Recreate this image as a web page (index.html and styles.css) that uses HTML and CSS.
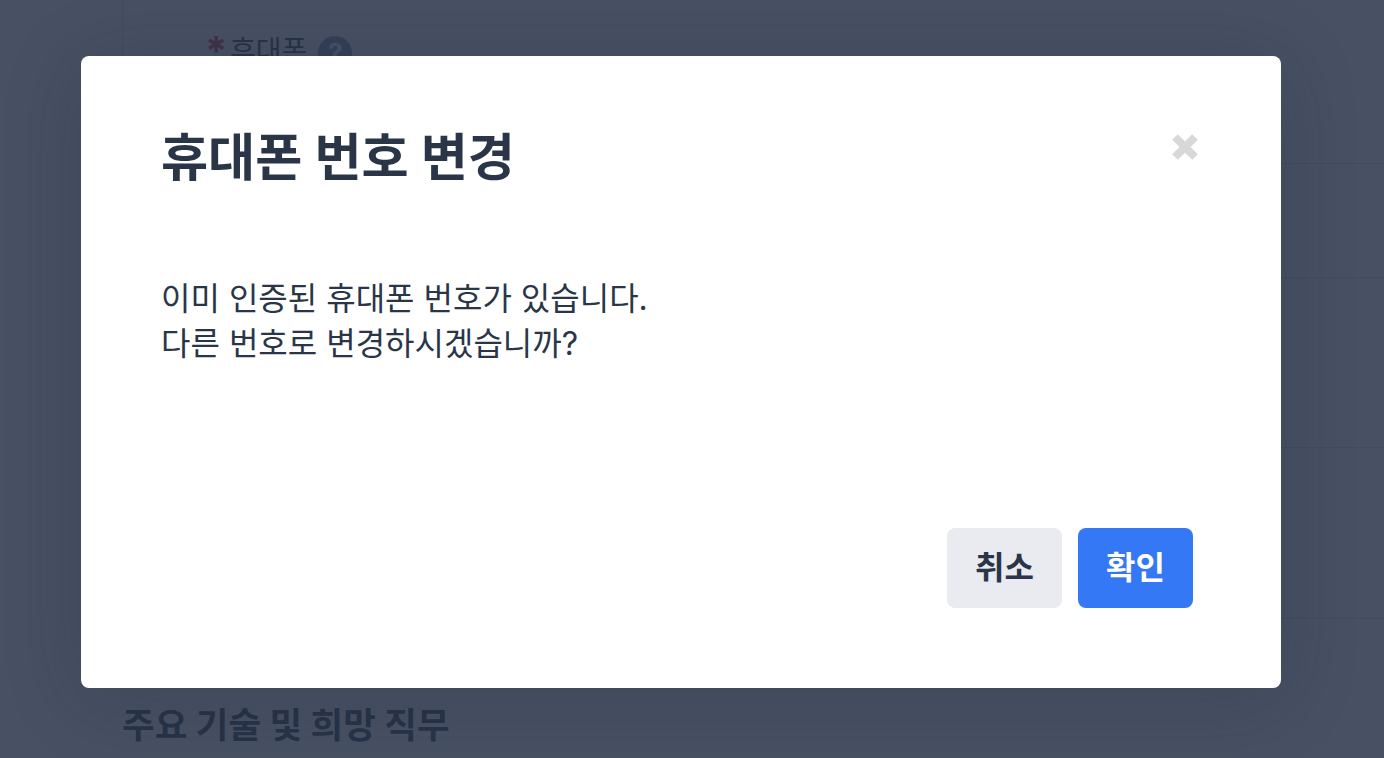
FILE: index.html
```html
<!DOCTYPE html>
<html lang="ko">
<head>
    <meta charset="UTF-8">
    <meta name="viewport" content="width=device-width, initial-scale=1.0">
    <title>휴대폰 번호 변경</title>
    <link rel="stylesheet" href="styles.css">
</head>
<body>
    <div class="page">
        <div class="form-box">
            <div class="form-row row-phone">
                <label class="field-label">
                    <span class="required">*</span>휴대폰
                    <span class="help">?</span>
                </label>
            </div>
            <div class="form-row row-second"></div>
            <div class="form-row row-tall"></div>
            <div class="form-row row-tall"></div>
        </div>
        <h2 class="section-title">주요 기술 및 희망 직무</h2>
    </div>

    <div class="overlay">
        <div class="modal">
            <div class="modal-header">
                <h1>휴대폰 번호 변경</h1>
                <button class="close" aria-label="닫기">
                    <svg width="30" height="30" viewBox="0 0 30 30">
                        <path d="M5 5 L25 25 M25 5 L5 25" stroke="#d8d8d8" stroke-width="8"/>
                    </svg>
                </button>
            </div>
            <p class="modal-body">이미 인증된 휴대폰 번호가 있습니다.<br>다른 번호로 변경하시겠습니까?</p>
            <div class="modal-footer">
                <button class="button button-cancel">취소</button>
                <button class="button button-ok">확인</button>
            </div>
        </div>
    </div>
</body>
</html>
```

FILE: styles.css
```css
* {
    box-sizing: border-box;
}
html, body {
    height: 100%;
}
body {
    margin: 0;
    font-family: Inter, "Noto Sans CJK KR", sans-serif;
    color: #2a3648;
    background: #fff;
    overflow: hidden;
}
.page {
    height: 758px;
    padding-left: 122px;
    overflow: hidden;
}
.form-box {
    border-left: 1px solid #d8dce2;
    border-bottom: 1px solid #d8dce2;
}
.form-row {
    border-bottom: 1px solid #d8dce2;
}
.form-row:last-child {
    border-bottom: none;
}
.row-phone {
    height: 164px;
    padding: 34px 0 0 82px;
}
.row-second {
    height: 114px;
}
.row-tall {
    height: 170px;
}
.field-label {
    display: flex;
    align-items: flex-start;
    font-size: 28px;
    line-height: 34px;
}
.required {
    width: 25px;
    color: #d0324b;
    font-size: 40px;
    font-weight: 700;
    line-height: 34px;
}
.help {
    width: 34px;
    height: 34px;
    margin: 2px 0 0 11px;
    border-radius: 50%;
    background: #7c8db5;
    color: #fff;
    font-size: 26px;
    font-weight: 700;
    text-align: center;
}
.section-title {
    margin: 85px 0 0;
    font-size: 35.5px;
    line-height: 44px;
    font-weight: 700;
}
.overlay {
    position: absolute;
    inset: 0;
    background: rgba(39, 50, 72, 0.85);
    padding: 56px 0 0 81px;
}
.modal {
    width: 1200px;
    height: 632px;
    padding: 64px 88px 80px 80px;
    background: #fff;
    border-radius: 8px;
    box-shadow: 0 10px 80px rgba(30, 30, 50, 0.2);
    display: flex;
    flex-direction: column;
}
.modal-header {
    display: flex;
    justify-content: space-between;
    align-items: flex-start;
}
.modal-header h1 {
    margin: 1px 0 -1px;
    font-size: 51.2px;
    line-height: 72px;
    font-weight: 700;
    color: #2a3648;
}
.close {
    border: none;
    background: none;
    padding: 0;
    margin: 12px -7px 0 0;
    height: 30px;
}
.modal-body {
    margin: 84px 0 0;
    font-size: 32px;
    line-height: 45px;
    color: #2a3648;
}
.modal-footer {
    margin-top: auto;
    display: flex;
    justify-content: flex-end;
    gap: 16px;
}
.button {
    width: 115px;
    height: 80px;
    padding: 0 0 6px;
    border: none;
    border-radius: 8px;
    font-family: inherit;
    font-size: 32px;
    font-weight: 700;
}
.button-cancel {
    background: #e9ebf1;
    color: #2a3648;
}
.button-ok {
    background: #3578f6;
    color: #fff;
}
```
